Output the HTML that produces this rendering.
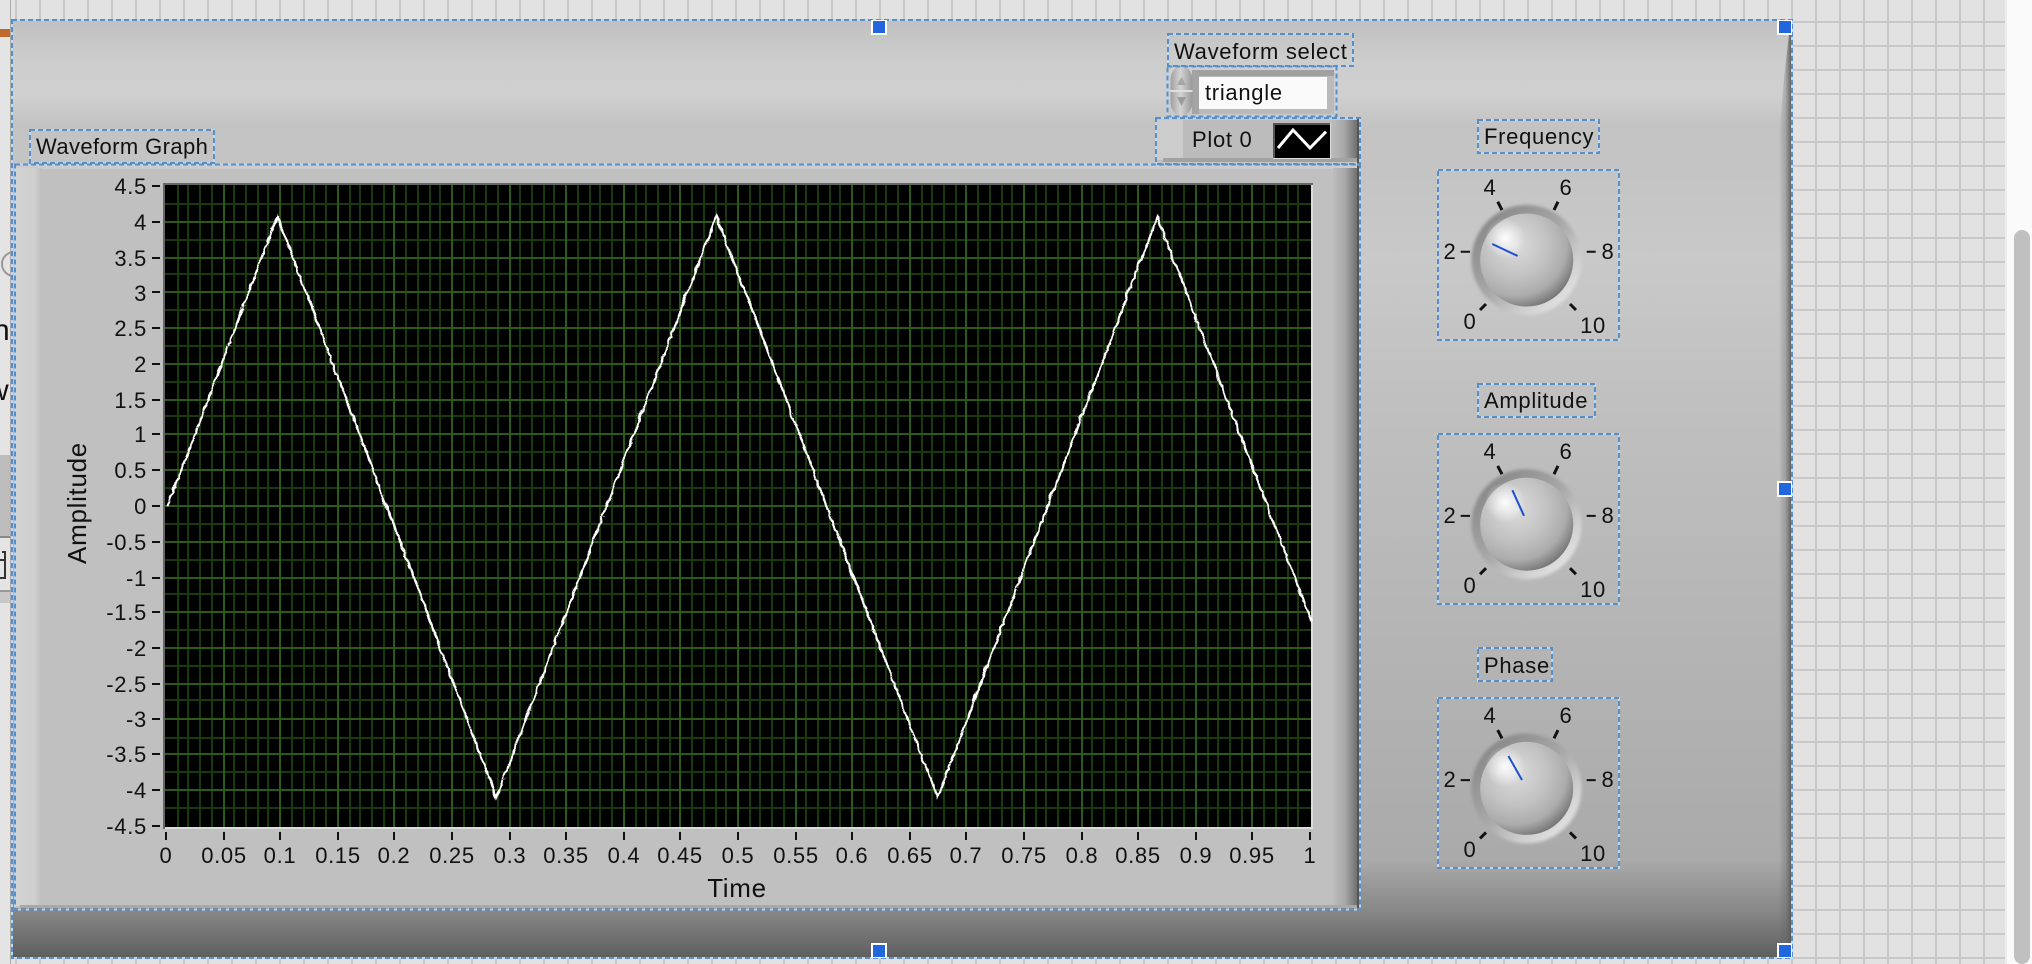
<!DOCTYPE html>
<html>
<head>
<meta charset="utf-8">
<title>Waveform Graph</title>
<style>
html,body{margin:0;padding:0;background:#e2e2e2;width:2032px;height:964px;overflow:hidden}
svg{display:block;position:absolute;left:0;top:0}
text{font-family:"Liberation Sans",sans-serif;font-size:22px;fill:#111;letter-spacing:.7px}
.a{fill:none;stroke:#c3d7ea;stroke-width:2}
.b{fill:none;stroke:#5b8ec6;stroke-width:2;stroke-dasharray:5 3}
.r text{text-anchor:end}
.c text{text-anchor:middle}
.t{stroke:#111;stroke-width:2;fill:none}
.k{stroke:#111;stroke-width:3;fill:none}
.n{stroke:#1f4fd0;stroke-width:2;fill:none}
</style>
</head>
<body>
<svg width="2032" height="964" viewBox="0 0 2032 964" xmlns="http://www.w3.org/2000/svg">
<defs>
<pattern id="grid" patternUnits="userSpaceOnUse" x="0" y="0" width="24" height="24">
<rect width="24" height="24" fill="#e2e2e2"/>
<rect x="15" y="0" width="2" height="24" fill="#c8c8c8"/>
<rect x="0" y="21" width="24" height="2" fill="#c8c8c8"/>
</pattern>
<linearGradient id="pg" gradientUnits="userSpaceOnUse" x1="0" y1="20" x2="0" y2="958">
<stop offset="0" stop-color="#c0c0c0"/>
<stop offset=".043" stop-color="#cdcdcd"/>
<stop offset=".08" stop-color="#d0d0d0"/>
<stop offset=".112" stop-color="#c3c3c3"/>
<stop offset=".16" stop-color="#c4c4c4"/>
<stop offset=".256" stop-color="#c9c9c9"/>
<stop offset=".405" stop-color="#c0c0c0"/>
<stop offset=".895" stop-color="#aaaaaa"/>
<stop offset=".949" stop-color="#888888"/>
<stop offset="1" stop-color="#5e5e5e"/>
</linearGradient>
<linearGradient id="rb"><stop offset="0" stop-color="#555" stop-opacity="0"/><stop offset=".5" stop-color="#666" stop-opacity=".35"/><stop offset="1" stop-color="#555"/></linearGradient>
<linearGradient id="lb"><stop offset="0" stop-color="#d2d2d2"/><stop offset=".75" stop-color="#d0d0d0"/><stop offset="1" stop-color="#bebebe"/></linearGradient>
<linearGradient id="gr"><stop offset="0" stop-color="#bdbdbd"/><stop offset=".5" stop-color="#a8a8a8"/><stop offset="1" stop-color="#707070"/></linearGradient>
<linearGradient id="st"><stop offset="0" stop-color="#a0a0a0"/><stop offset=".45" stop-color="#d4d4d4"/><stop offset="1" stop-color="#989898"/></linearGradient>
<linearGradient id="ring" x1=".1" y1=".1" x2=".85" y2=".9"><stop offset="0" stop-color="#868686"/><stop offset=".5" stop-color="#a8a8a8"/><stop offset=".8" stop-color="#cfcfcf"/><stop offset="1" stop-color="#e4e4e4"/></linearGradient>
<radialGradient id="ball" cx=".38" cy=".34" r=".76"><stop offset="0" stop-color="#dcdcdc"/><stop offset=".45" stop-color="#c2c2c2"/><stop offset=".72" stop-color="#acacac"/><stop offset=".88" stop-color="#808080"/><stop offset="1" stop-color="#5c5c5c"/></radialGradient>
<radialGradient id="hl"><stop offset="0" stop-color="#fff" stop-opacity=".95"/><stop offset="1" stop-color="#fff" stop-opacity="0"/></radialGradient>
<filter id="bl" x="-10%" y="-10%" width="120%" height="120%"><feGaussianBlur stdDeviation="1.6"/></filter>
<filter id="wob" filterUnits="userSpaceOnUse" x="160" y="200" width="1160" height="610"><feTurbulence type="turbulence" baseFrequency=".09" numOctaves="1" seed="4" result="n"/><feDisplacementMap in="SourceGraphic" in2="n" scale="4" xChannelSelector="R" yChannelSelector="G"/></filter>
<g id="knob">
<circle cx="1526.5" cy="260" r="55" fill="url(#ring)" filter="url(#bl)"/>
<circle cx="1526.7" cy="260" r="46.5" fill="url(#ball)"/>
<circle cx="1505" cy="238" r="20" fill="url(#hl)"/>
<path class="k" d="M1497.7 201.7L1502 210M1558 201.7L1554 210M1486 304L1480 310M1570 304L1576 310"/>
<path class="t" d="M1460.7 251.7H1470M1586.7 251.7H1595.7"/>
</g>
</defs>

<!-- page background -->
<rect width="2032" height="964" fill="url(#grid)"/>
<rect x="2005" y="0" width="2" height="964" fill="#ececec"/>
<rect x="2007" y="0" width="25" height="964" fill="#fafafa"/>
<rect x="2014" y="230" width="16" height="734" rx="8" fill="#c0c0c0"/>

<!-- left strip -->
<rect x="0" y="0" width="10" height="964" fill="#e4e4e4"/>
<rect x="10" y="0" width="1" height="964" fill="#aaaaaa"/>
<rect x="0" y="29" width="10" height="8" fill="#c0692a"/>
<circle cx="14" cy="264" r="12" fill="none" stroke="#999" stroke-width="2"/>
<rect x="0" y="455" width="10" height="82" fill="#bdbdbd"/>
<rect x="0" y="536" width="10" height="2" fill="#888"/>
<rect x="0" y="590" width="10" height="2" fill="#999"/>
<rect x="0" y="592" width="10" height="11" fill="#c8c8c8"/>
<path d="M0 560H5V578H0M2 552H5V560" fill="none" stroke="#333" stroke-width="2"/>
<svg x="0" y="300" width="10" height="120" viewBox="0 0 10 120"><text x="-7" y="40" style="font-size:30px;letter-spacing:0">n</text><text x="-13" y="100" style="font-size:30px;letter-spacing:0">w</text></svg>

<!-- panel -->
<rect x="11" y="20" width="1781" height="938" fill="url(#pg)"/>
<path d="M1789 35L1786 60L1782 100L1779 140V958H1792V35Z" fill="url(#rb)"/>

<!-- graph frame -->
<rect x="15" y="166" width="1343" height="742" fill="#c0c0c0"/>
<rect x="15" y="166" width="1343" height="3" fill="#cccccc"/>
<rect x="15" y="168" width="26" height="738" fill="url(#lb)"/>
<rect x="1333" y="168" width="24" height="738" fill="url(#gr)"/>
<rect x="1357" y="165" width="2" height="743" fill="#555"/>
<rect x="20" y="905" width="1337" height="3" fill="#a8a8a8"/>

<!-- plot -->
<rect x="163" y="183" width="1150" height="646" fill="#666"/>
<rect x="165" y="827" width="1148" height="2" fill="#dcdcdc"/>
<rect x="1311" y="185" width="2" height="644" fill="#dcdcdc"/>
<rect x="165" y="185" width="1146" height="642" fill="#000"/>
<path stroke="#1a3a0c" stroke-width="2" fill="none" d="M178 185V827M188 185V827M200 185V827M212 185V827M234 185V827M246 185V827M258 185V827M268 185V827M292 185V827M304 185V827M314 185V827M326 185V827M350 185V827M360 185V827M372 185V827M384 185V827M406 185V827M418 185V827M430 185V827M440 185V827M464 185V827M474 185V827M486 185V827M498 185V827M520 185V827M532 185V827M544 185V827M554 185V827M578 185V827M590 185V827M600 185V827M612 185V827M636 185V827M646 185V827M658 185V827M670 185V827M692 185V827M704 185V827M716 185V827M726 185V827M750 185V827M760 185V827M772 185V827M784 185V827M806 185V827M818 185V827M830 185V827M840 185V827M864 185V827M876 185V827M886 185V827M898 185V827M922 185V827M932 185V827M944 185V827M956 185V827M978 185V827M990 185V827M1002 185V827M1012 185V827M1036 185V827M1046 185V827M1058 185V827M1070 185V827M1092 185V827M1104 185V827M1116 185V827M1126 185V827M1150 185V827M1162 185V827M1172 185V827M1184 185V827M1208 185V827M1218 185V827M1230 185V827M1242 185V827M1264 185V827M1276 185V827M1288 185V827M1298 185V827"/>
<path stroke="#1a3a0c" stroke-width="2" fill="none" d="M165 204H1311M165 240H1311M165 274H1311M165 310H1311M165 346H1311M165 382H1311M165 416H1311M165 452H1311M165 488H1311M165 524H1311M165 560H1311M165 594H1311M165 630H1311M165 666H1311M165 700H1311M165 738H1311M165 772H1311M165 808H1311"/>
<path stroke="#2c5a18" stroke-width="2" fill="none" d="M224 185V827M280 185V827M338 185V827M394 185V827M452 185V827M510 185V827M566 185V827M624 185V827M680 185V827M738 185V827M796 185V827M852 185V827M910 185V827M966 185V827M1024 185V827M1082 185V827M1138 185V827M1196 185V827M1252 185V827"/>
<path stroke="#2c5a18" stroke-width="2" fill="none" d="M165 222H1311M165 258H1311M165 292H1311M165 328H1311M165 364H1311M165 400H1311M165 434H1311M165 470H1311M165 506H1311M165 542H1311M165 578H1311M165 612H1311M165 648H1311M165 684H1311M165 719H1311M165 754H1311M165 790H1311"/>
<path d="M166 505.7L276 215L495 796L715 215L936 796L1156 215L1310 620" fill="none" stroke="#fff" stroke-width="2.2" filter="url(#wob)"/>

<!-- y ticks -->
<path stroke="#111" stroke-width="2" fill="none" d="M152 186H160M152 222H160M152 258H160M152 292H160M152 328H160M152 364H160M152 400H160M152 434H160M152 470H160M152 506H160M152 542H160M152 578H160M152 612H160M152 648H160M152 684H160M152 719H160M152 754H160M152 790H160M152 826H160"/>
<g class="r">
<text x="147" y="194">4.5</text>
<text x="147" y="230">4</text>
<text x="147" y="266">3.5</text>
<text x="147" y="301">3</text>
<text x="147" y="336">2.5</text>
<text x="147" y="372">2</text>
<text x="147" y="408">1.5</text>
<text x="147" y="442">1</text>
<text x="147" y="478">0.5</text>
<text x="147" y="514">0</text>
<text x="147" y="550">-0.5</text>
<text x="147" y="586">-1</text>
<text x="147" y="620">-1.5</text>
<text x="147" y="656">-2</text>
<text x="147" y="692">-2.5</text>
<text x="147" y="727">-3</text>
<text x="147" y="762">-3.5</text>
<text x="147" y="798">-4</text>
<text x="147" y="834">-4.5</text>
</g>
<!-- x ticks -->
<path stroke="#111" stroke-width="2" fill="none" d="M166 832V840M224 832V840M280 832V840M338 832V840M394 832V840M452 832V840M510 832V840M566 832V840M624 832V840M680 832V840M738 832V840M796 832V840M852 832V840M910 832V840M966 832V840M1024 832V840M1082 832V840M1138 832V840M1196 832V840M1252 832V840M1310 832V840"/>
<g class="c">
<text x="166" y="863">0</text>
<text x="224" y="863">0.05</text>
<text x="280" y="863">0.1</text>
<text x="338" y="863">0.15</text>
<text x="394" y="863">0.2</text>
<text x="452" y="863">0.25</text>
<text x="510" y="863">0.3</text>
<text x="566" y="863">0.35</text>
<text x="624" y="863">0.4</text>
<text x="680" y="863">0.45</text>
<text x="738" y="863">0.5</text>
<text x="796" y="863">0.55</text>
<text x="852" y="863">0.6</text>
<text x="910" y="863">0.65</text>
<text x="966" y="863">0.7</text>
<text x="1024" y="863">0.75</text>
<text x="1082" y="863">0.8</text>
<text x="1138" y="863">0.85</text>
<text x="1196" y="863">0.9</text>
<text x="1252" y="863">0.95</text>
<text x="1310" y="863">1</text>
</g>
<text x="737" y="897" text-anchor="middle" style="font-size:26px">Time</text>
<text transform="translate(86 503) rotate(-90)" text-anchor="middle" style="font-size:26px">Amplitude</text>

<!-- labels -->
<text x="36" y="154" style="letter-spacing:.4px">Waveform Graph</text>
<text x="1174" y="59">Waveform select</text>

<!-- ring -->
<rect x="1192" y="70" width="142" height="44" fill="#bababa"/>
<rect x="1192" y="70" width="142" height="6" fill="#a0a0a0"/>
<rect x="1192" y="70" width="7" height="44" fill="#a4a4a4"/>
<rect x="1170.5" y="66" width="22" height="50" rx="11" ry="14" fill="url(#st)"/>
<rect x="1170.5" y="90" width="22" height="2" fill="#dedede"/>
<path d="M1181.5 77L1177 85H1186Z" fill="#a6a6a6"/>
<path d="M1181.5 106L1177 97H1186Z" fill="#9c9c9c"/>
<rect x="1199" y="77" width="128" height="32" fill="#fafafa"/>
<text x="1205" y="100">triangle</text>

<!-- legend -->
<rect x="1157" y="120" width="200" height="42" fill="#bcbcbc"/>
<rect x="1157" y="120" width="26" height="40" fill="#cccccc"/>
<rect x="1331" y="120" width="26" height="40" fill="url(#gr)"/>
<rect x="1357" y="119" width="2" height="44" fill="#555"/>
<rect x="1163" y="158" width="194" height="4" fill="#a2a2a2"/>
<text x="1192" y="147">Plot 0</text>
<rect x="1273" y="123" width="58" height="36" fill="#dcdcdc"/>
<rect x="1273" y="123" width="57" height="35" fill="#555"/>
<rect x="1275" y="125" width="55" height="33" fill="#000"/>
<path d="M1278 148L1293 130L1310 148L1326 131.7" fill="none" stroke="#fff" stroke-width="3"/>

<!-- knobs -->
<text x="1484" y="144">Frequency</text>
<use href="#knob"/>
<path class="n" d="M1492.3 244L1517.7 256"/>
<g class="c">
<text x="1490" y="195">4</text><text x="1566" y="195">6</text>
<text x="1450" y="259">2</text><text x="1608" y="259">8</text>
<text x="1470" y="329">0</text><text x="1593" y="333">10</text>
</g>

<text x="1484" y="408">Amplitude</text>
<use href="#knob" transform="translate(0 264.2)"/>
<path class="n" d="M1512.4 490.2L1524 515.8"/>
<g class="c">
<text x="1490" y="459">4</text><text x="1566" y="459">6</text>
<text x="1450" y="523">2</text><text x="1608" y="523">8</text>
<text x="1470" y="593">0</text><text x="1593" y="597">10</text>
</g>

<text x="1484" y="673">Phase</text>
<use href="#knob" transform="translate(0 528.4)"/>
<path class="n" d="M1508.4 756L1522 780"/>
<g class="c">
<text x="1490" y="723">4</text><text x="1566" y="723">6</text>
<text x="1450" y="787">2</text><text x="1608" y="787">8</text>
<text x="1470" y="857">0</text><text x="1593" y="861">10</text>
</g>

<!-- dashed selection boxes -->
<g class="a">
<rect x="12" y="20" width="1780" height="938"/>
<rect x="15" y="164.5" width="1345" height="745"/>
<rect x="30" y="130" width="184" height="33"/>
<rect x="1168" y="34" width="185" height="32"/>
<rect x="1167.5" y="66.5" width="169" height="50"/>
<rect x="1156" y="118" width="204" height="46"/>
<rect x="1478" y="120" width="121" height="33"/>
<rect x="1438" y="170" width="181" height="170"/>
<rect x="1478" y="384" width="117" height="33"/>
<rect x="1438" y="434" width="181" height="170"/>
<rect x="1478" y="648" width="74" height="33"/>
<rect x="1438" y="698" width="181" height="170"/>
</g>
<g class="b">
<rect x="12" y="20" width="1780" height="938"/>
<rect x="15" y="164.5" width="1345" height="745"/>
<rect x="30" y="130" width="184" height="33"/>
<rect x="1168" y="34" width="185" height="32"/>
<rect x="1167.5" y="66.5" width="169" height="50"/>
<rect x="1156" y="118" width="204" height="46"/>
<rect x="1478" y="120" width="121" height="33"/>
<rect x="1438" y="170" width="181" height="170"/>
<rect x="1478" y="384" width="117" height="33"/>
<rect x="1438" y="434" width="181" height="170"/>
<rect x="1478" y="648" width="74" height="33"/>
<rect x="1438" y="698" width="181" height="170"/>
</g>

<!-- handles -->
<g fill="#fff">
<rect x="871" y="20" width="16" height="15"/>
<rect x="1777" y="20" width="15" height="15"/>
<rect x="1777" y="481" width="15" height="16"/>
<rect x="871" y="943" width="16" height="15"/>
<rect x="1777" y="943" width="15" height="15"/>
</g>
<g fill="#2266dd">
<rect x="873" y="21" width="12" height="12"/>
<rect x="1779" y="21" width="12" height="12"/>
<rect x="1779" y="483" width="12" height="12"/>
<rect x="873" y="945" width="12" height="12"/>
<rect x="1779" y="945" width="12" height="12"/>
</g>
</svg>
</body>
</html>
